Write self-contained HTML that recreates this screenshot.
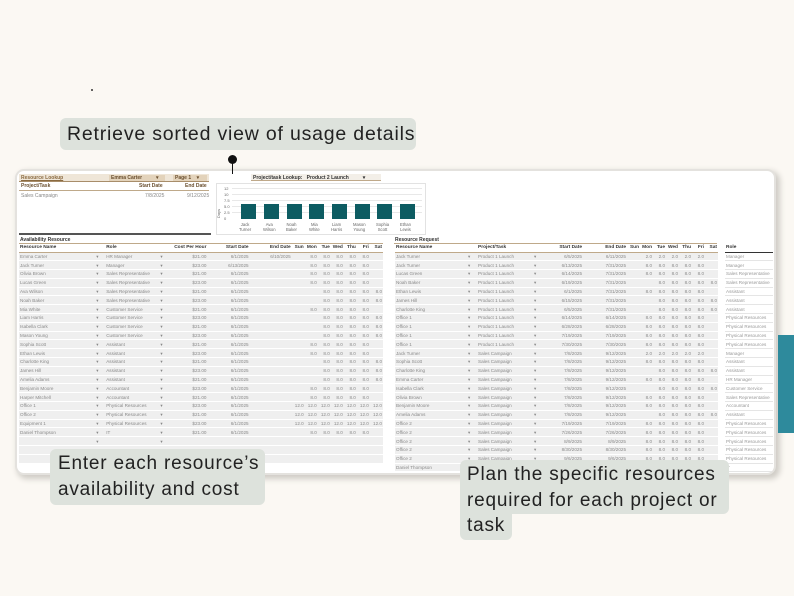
<!DOCTYPE html>
<html><head><meta charset="utf-8">
<style>
*{margin:0;padding:0;box-sizing:border-box}
body{width:794px;height:596px;background:#fbf8f3;position:relative;overflow:hidden;font-family:"Liberation Sans",sans-serif}
.abs{position:absolute}
.panel{position:absolute;left:17px;top:171px;width:757px;height:302px;background:#fff;border-radius:7px;box-shadow:0 0 0 2px #e4e2de,3px 3px 6px 3px #cfccc6;overflow:hidden}
.t{position:absolute;font-size:5px;color:#555;white-space:nowrap}
.b{font-weight:bold;color:#333}
table{position:absolute;border-collapse:collapse;table-layout:fixed;font-size:4.6px;color:#8a8a8a}
td{height:8.8px;padding:0 1px;white-space:nowrap;overflow:hidden;border-bottom:1px solid #fff;background:#efefef;line-height:7px}
th{height:8px;font-weight:bold;color:#333;text-align:left;padding:0 1px;white-space:nowrap;border-bottom:1px solid #bfa98a;font-size:4.8px}
.r{text-align:right}.c{text-align:center}
.call{position:absolute;background:#dde2dc;border-radius:6px;color:#222;font-size:19px;font-family:"Liberation Sans",sans-serif;letter-spacing:0.8px;white-space:nowrap}
</style></head><body>
<div class="abs" style="left:91px;top:89px;width:2px;height:2px;background:#333;border-radius:1px"></div>

<div class="panel">
 <div class="abs" style="left:2px;top:3px;width:190px;height:8px;background:#efe6d8;border-bottom:1px solid #a88d6a"></div>
 <div class="t b" style="left:4px;top:4px;color:#8a6a40;text-decoration:underline">Resource Lookup</div>
 <div class="abs" style="left:92px;top:4px;width:56px;height:6px;background:#e3d3bb"></div>
 <div class="t b" style="left:94px;top:4px;color:#6b5030">Emma Carter&nbsp;&nbsp;&nbsp;&nbsp;&nbsp;&nbsp;&nbsp;&nbsp;&nbsp;&nbsp;▾</div>
 <div class="abs" style="left:156px;top:4px;width:34px;height:6px;background:#e3d3bb"></div>
 <div class="t b" style="left:158px;top:4px;color:#6b5030">Page 1&nbsp;&nbsp;&nbsp;&nbsp;▾</div>
 <div class="t b" style="left:4px;top:12px;color:#6b5030">Project/Task</div>
 <div class="t b" style="left:122px;top:12px;color:#6b5030">Start Date</div>
 <div class="t b" style="left:168px;top:12px;color:#6b5030">End Date</div>
 <div class="abs" style="left:2px;top:19px;width:190px;height:1px;background:#bfa98a"></div>
 <div class="t" style="left:4px;top:22px;color:#888">Sales Campaign</div>
 <div class="t" style="left:128px;top:22px;color:#888">7/8/2025</div>
 <div class="t" style="left:170px;top:22px;color:#888">9/12/2025</div>
 <div class="abs" style="left:2px;top:62px;width:192px;height:2px;background:#555"></div>

 <div class="abs" style="left:234px;top:3px;width:130px;height:7px;background:#f3efe8;border-bottom:1px solid #bfa98a"></div>
 <div class="t b" style="left:236px;top:4px">Project/task Lookup:&nbsp;&nbsp;&nbsp;Product 2 Launch&nbsp;&nbsp;&nbsp;&nbsp;&nbsp;&nbsp;&nbsp;&nbsp;&nbsp;&nbsp;▾</div>

 <div class="abs" style="left:199px;top:12px;width:210px;height:52px;border:1px solid #e2e2e2;background:#fff"></div>
 <div class="abs" style="left:215px;top:17px;width:190px;height:30px;background:repeating-linear-gradient(#e8e8e8 0 1px,transparent 1px 6px)"></div>
 <div class="t" style="left:207px;top:15px;font-size:4px;line-height:6px;color:#666">12<br>10<br>7.5<br>5.0<br>2.5<br>0</div>
 <div class="t" style="left:197px;top:40px;font-size:4px;color:#666;transform:rotate(-90deg)">Days</div>
 <div class="abs" style="left:224px;top:33px;width:15px;height:15px;background:#0d5c62"></div>
 <div class="abs" style="left:247px;top:33px;width:15px;height:15px;background:#0d5c62"></div>
 <div class="abs" style="left:270px;top:33px;width:15px;height:15px;background:#0d5c62"></div>
 <div class="abs" style="left:292px;top:33px;width:15px;height:15px;background:#0d5c62"></div>
 <div class="abs" style="left:315px;top:33px;width:15px;height:15px;background:#0d5c62"></div>
 <div class="abs" style="left:338px;top:33px;width:15px;height:15px;background:#0d5c62"></div>
 <div class="abs" style="left:360px;top:33px;width:15px;height:15px;background:#0d5c62"></div>
 <div class="abs" style="left:383px;top:33px;width:15px;height:15px;background:#0d5c62"></div>
 <div class="t c" style="left:222px;top:51px;font-size:4.2px;line-height:5px;color:#666">Jack<br>Turner</div>
 <div class="t c" style="left:246px;top:51px;font-size:4.2px;line-height:5px;color:#666">Ava<br>Wilson</div>
 <div class="t c" style="left:269px;top:51px;font-size:4.2px;line-height:5px;color:#666">Noah<br>Baker</div>
 <div class="t c" style="left:292px;top:51px;font-size:4.2px;line-height:5px;color:#666">Mia<br>White</div>
 <div class="t c" style="left:314px;top:51px;font-size:4.2px;line-height:5px;color:#666">Liam<br>Harris</div>
 <div class="t c" style="left:336px;top:51px;font-size:4.2px;line-height:5px;color:#666">Mason<br>Young</div>
 <div class="t c" style="left:359px;top:51px;font-size:4.2px;line-height:5px;color:#666">Sophia<br>Scott</div>
 <div class="t c" style="left:383px;top:51px;font-size:4.2px;line-height:5px;color:#666">Ethan<br>Lewis</div>

 <div class="t b" style="left:3px;top:66px">Availability Resource</div>
 <div class="abs" style="left:2px;top:72px;width:364px;height:1px;background:#bfa98a"></div>
 <div class="t b" style="left:378px;top:66px">Resource Request</div>
 <div class="abs" style="left:377px;top:72px;width:323px;height:1px;background:#bfa98a"></div>

 <table style="left:2px;top:73px;width:364px">
 <colgroup><col style="width:76px"><col style="width:10px"><col style="width:54px"><col style="width:10px"><col style="width:38px"><col style="width:42px"><col style="width:42px"><col span="7" style="width:13px"></colgroup>
 <tr><th>Resource Name</th><th></th><th>Role</th><th></th><th class="r">Cost Per Hour</th><th class="r">Start Date</th><th class="r">End Date</th><th class="r">Sun</th><th class="r">Mon</th><th class="r">Tue</th><th class="r">Wed</th><th class="r">Thu</th><th class="r">Fri</th><th class="r">Sat</th></tr>
 <tr><td>Emma Carter</td><td>▾</td><td>HR Manager</td><td>▾</td><td class="r">$21.00</td><td class="r">6/1/2025</td><td class="r">6/10/2025</td><td></td><td class="r">8.0</td><td class="r">8.0</td><td class="r">8.0</td><td class="r">8.0</td><td class="r">8.0</td><td></td></tr>
 <tr><td>Jack Turner</td><td>▾</td><td>Manager</td><td>▾</td><td class="r">$23.00</td><td class="r">6/13/2025</td><td></td><td></td><td class="r">8.0</td><td class="r">8.0</td><td class="r">8.0</td><td class="r">8.0</td><td class="r">8.0</td><td></td></tr>
 <tr><td>Olivia Brown</td><td>▾</td><td>Sales Representative</td><td>▾</td><td class="r">$21.00</td><td class="r">6/1/2025</td><td></td><td></td><td class="r">8.0</td><td class="r">8.0</td><td class="r">8.0</td><td class="r">8.0</td><td class="r">8.0</td><td></td></tr>
 <tr><td>Lucas Green</td><td>▾</td><td>Sales Representative</td><td>▾</td><td class="r">$23.00</td><td class="r">6/1/2025</td><td></td><td></td><td class="r">8.0</td><td class="r">8.0</td><td class="r">8.0</td><td class="r">8.0</td><td class="r">8.0</td><td></td></tr>
 <tr><td>Ava Wilson</td><td>▾</td><td>Sales Representative</td><td>▾</td><td class="r">$21.00</td><td class="r">6/1/2025</td><td></td><td></td><td></td><td class="r">8.0</td><td class="r">8.0</td><td class="r">8.0</td><td class="r">8.0</td><td class="r">8.0</td></tr>
 <tr><td>Noah Baker</td><td>▾</td><td>Sales Representative</td><td>▾</td><td class="r">$23.00</td><td class="r">6/1/2025</td><td></td><td></td><td></td><td class="r">8.0</td><td class="r">8.0</td><td class="r">8.0</td><td class="r">8.0</td><td class="r">8.0</td></tr>
 <tr><td>Mia White</td><td>▾</td><td>Customer Service</td><td>▾</td><td class="r">$21.00</td><td class="r">6/1/2025</td><td></td><td></td><td class="r">8.0</td><td class="r">8.0</td><td class="r">8.0</td><td class="r">8.0</td><td class="r">8.0</td><td></td></tr>
 <tr><td>Liam Harris</td><td>▾</td><td>Customer Service</td><td>▾</td><td class="r">$23.00</td><td class="r">6/1/2025</td><td></td><td></td><td></td><td class="r">8.0</td><td class="r">8.0</td><td class="r">8.0</td><td class="r">8.0</td><td class="r">8.0</td></tr>
 <tr><td>Isabella Clark</td><td>▾</td><td>Customer Service</td><td>▾</td><td class="r">$21.00</td><td class="r">6/1/2025</td><td></td><td></td><td></td><td class="r">8.0</td><td class="r">8.0</td><td class="r">8.0</td><td class="r">8.0</td><td class="r">8.0</td></tr>
 <tr><td>Mason Young</td><td>▾</td><td>Customer Service</td><td>▾</td><td class="r">$23.00</td><td class="r">6/1/2025</td><td></td><td></td><td></td><td class="r">8.0</td><td class="r">8.0</td><td class="r">8.0</td><td class="r">8.0</td><td class="r">8.0</td></tr>
 <tr><td>Sophia Scott</td><td>▾</td><td>Assistant</td><td>▾</td><td class="r">$21.00</td><td class="r">6/1/2025</td><td></td><td></td><td class="r">8.0</td><td class="r">8.0</td><td class="r">8.0</td><td class="r">8.0</td><td class="r">8.0</td><td></td></tr>
 <tr><td>Ethan Lewis</td><td>▾</td><td>Assistant</td><td>▾</td><td class="r">$23.00</td><td class="r">6/1/2025</td><td></td><td></td><td class="r">8.0</td><td class="r">8.0</td><td class="r">8.0</td><td class="r">8.0</td><td class="r">8.0</td><td></td></tr>
 <tr><td>Charlotte King</td><td>▾</td><td>Assistant</td><td>▾</td><td class="r">$21.00</td><td class="r">6/1/2025</td><td></td><td></td><td></td><td class="r">8.0</td><td class="r">8.0</td><td class="r">8.0</td><td class="r">8.0</td><td class="r">8.0</td></tr>
 <tr><td>James Hill</td><td>▾</td><td>Assistant</td><td>▾</td><td class="r">$23.00</td><td class="r">6/1/2025</td><td></td><td></td><td></td><td class="r">8.0</td><td class="r">8.0</td><td class="r">8.0</td><td class="r">8.0</td><td class="r">8.0</td></tr>
 <tr><td>Amelia Adams</td><td>▾</td><td>Assistant</td><td>▾</td><td class="r">$21.00</td><td class="r">6/1/2025</td><td></td><td></td><td></td><td class="r">8.0</td><td class="r">8.0</td><td class="r">8.0</td><td class="r">8.0</td><td class="r">8.0</td></tr>
 <tr><td>Benjamin Moore</td><td>▾</td><td>Accountant</td><td>▾</td><td class="r">$23.00</td><td class="r">6/1/2025</td><td></td><td></td><td class="r">8.0</td><td class="r">8.0</td><td class="r">8.0</td><td class="r">8.0</td><td class="r">8.0</td><td></td></tr>
 <tr><td>Harper Mitchell</td><td>▾</td><td>Accountant</td><td>▾</td><td class="r">$21.00</td><td class="r">6/1/2025</td><td></td><td></td><td class="r">8.0</td><td class="r">8.0</td><td class="r">8.0</td><td class="r">8.0</td><td class="r">8.0</td><td></td></tr>
 <tr><td>Office 1</td><td>▾</td><td>Physical Resources</td><td>▾</td><td class="r">$23.00</td><td class="r">6/1/2025</td><td></td><td class="r">12.0</td><td class="r">12.0</td><td class="r">12.0</td><td class="r">12.0</td><td class="r">12.0</td><td class="r">12.0</td><td class="r">12.0</td></tr>
 <tr><td>Office 2</td><td>▾</td><td>Physical Resources</td><td>▾</td><td class="r">$21.00</td><td class="r">6/1/2025</td><td></td><td class="r">12.0</td><td class="r">12.0</td><td class="r">12.0</td><td class="r">12.0</td><td class="r">12.0</td><td class="r">12.0</td><td class="r">12.0</td></tr>
 <tr><td>Equipment 1</td><td>▾</td><td>Physical Resources</td><td>▾</td><td class="r">$23.00</td><td class="r">6/1/2025</td><td></td><td class="r">12.0</td><td class="r">12.0</td><td class="r">12.0</td><td class="r">12.0</td><td class="r">12.0</td><td class="r">12.0</td><td class="r">12.0</td></tr>
 <tr><td>Daniel Thompson</td><td>▾</td><td>IT</td><td>▾</td><td class="r">$21.00</td><td class="r">6/1/2025</td><td></td><td></td><td class="r">8.0</td><td class="r">8.0</td><td class="r">8.0</td><td class="r">8.0</td><td class="r">8.0</td><td></td></tr>
 <tr><td></td><td>▾</td><td></td><td>▾</td><td></td><td></td><td></td><td></td><td></td><td></td><td></td><td></td><td></td><td></td></tr>
 <tr><td></td><td></td><td></td><td></td><td></td><td></td><td></td><td></td><td></td><td></td><td></td><td></td><td></td><td></td></tr>
 <tr><td></td><td></td><td></td><td></td><td></td><td></td><td></td><td></td><td></td><td></td><td></td><td></td><td></td><td></td></tr>
 </table>

 <table style="left:378px;top:73px;width:323px">
 <colgroup><col style="width:72px"><col style="width:10px"><col style="width:56px"><col style="width:10px"><col style="width:40px"><col style="width:44px"><col span="7" style="width:13px"></colgroup>
 <tr><th>Resource Name</th><th></th><th>Project/Task</th><th></th><th class="r">Start Date</th><th class="r">End Date</th><th class="r">Sun</th><th class="r">Mon</th><th class="r">Tue</th><th class="r">Wed</th><th class="r">Thu</th><th class="r">Fri</th><th class="r">Sat</th></tr>
 <tr><td>Jack Turner</td><td>▾</td><td>Product 1 Launch</td><td>▾</td><td class="r">6/5/2025</td><td class="r">6/11/2025</td><td></td><td class="r">2.0</td><td class="r">2.0</td><td class="r">2.0</td><td class="r">2.0</td><td class="r">2.0</td><td></td></tr>
 <tr><td>Jack Turner</td><td>▾</td><td>Product 1 Launch</td><td>▾</td><td class="r">6/13/2025</td><td class="r">7/31/2025</td><td></td><td class="r">8.0</td><td class="r">8.0</td><td class="r">8.0</td><td class="r">8.0</td><td class="r">8.0</td><td></td></tr>
 <tr><td>Lucas Green</td><td>▾</td><td>Product 1 Launch</td><td>▾</td><td class="r">6/14/2025</td><td class="r">7/31/2025</td><td></td><td class="r">8.0</td><td class="r">8.0</td><td class="r">8.0</td><td class="r">8.0</td><td class="r">8.0</td><td></td></tr>
 <tr><td>Noah Baker</td><td>▾</td><td>Product 1 Launch</td><td>▾</td><td class="r">6/19/2025</td><td class="r">7/31/2025</td><td></td><td></td><td class="r">8.0</td><td class="r">8.0</td><td class="r">8.0</td><td class="r">8.0</td><td class="r">8.0</td></tr>
 <tr><td>Ethan Lewis</td><td>▾</td><td>Product 1 Launch</td><td>▾</td><td class="r">6/1/2025</td><td class="r">7/31/2025</td><td></td><td class="r">8.0</td><td class="r">8.0</td><td class="r">8.0</td><td class="r">8.0</td><td class="r">8.0</td><td></td></tr>
 <tr><td>James Hill</td><td>▾</td><td>Product 1 Launch</td><td>▾</td><td class="r">6/15/2025</td><td class="r">7/31/2025</td><td></td><td></td><td class="r">8.0</td><td class="r">8.0</td><td class="r">8.0</td><td class="r">8.0</td><td class="r">8.0</td></tr>
 <tr><td>Charlotte King</td><td>▾</td><td>Product 1 Launch</td><td>▾</td><td class="r">6/5/2025</td><td class="r">7/31/2025</td><td></td><td></td><td class="r">8.0</td><td class="r">8.0</td><td class="r">8.0</td><td class="r">8.0</td><td class="r">8.0</td></tr>
 <tr><td>Office 1</td><td>▾</td><td>Product 1 Launch</td><td>▾</td><td class="r">6/14/2025</td><td class="r">6/14/2025</td><td></td><td class="r">8.0</td><td class="r">8.0</td><td class="r">8.0</td><td class="r">8.0</td><td class="r">8.0</td><td></td></tr>
 <tr><td>Office 1</td><td>▾</td><td>Product 1 Launch</td><td>▾</td><td class="r">6/28/2025</td><td class="r">6/28/2025</td><td></td><td class="r">8.0</td><td class="r">8.0</td><td class="r">8.0</td><td class="r">8.0</td><td class="r">8.0</td><td></td></tr>
 <tr><td>Office 1</td><td>▾</td><td>Product 1 Launch</td><td>▾</td><td class="r">7/19/2025</td><td class="r">7/19/2025</td><td></td><td class="r">8.0</td><td class="r">8.0</td><td class="r">8.0</td><td class="r">8.0</td><td class="r">8.0</td><td></td></tr>
 <tr><td>Office 1</td><td>▾</td><td>Product 1 Launch</td><td>▾</td><td class="r">7/30/2025</td><td class="r">7/30/2025</td><td></td><td class="r">8.0</td><td class="r">8.0</td><td class="r">8.0</td><td class="r">8.0</td><td class="r">8.0</td><td></td></tr>
 <tr><td>Jack Turner</td><td>▾</td><td>Sales Campaign</td><td>▾</td><td class="r">7/8/2025</td><td class="r">9/12/2025</td><td></td><td class="r">2.0</td><td class="r">2.0</td><td class="r">2.0</td><td class="r">2.0</td><td class="r">2.0</td><td></td></tr>
 <tr><td>Sophia Scott</td><td>▾</td><td>Sales Campaign</td><td>▾</td><td class="r">7/8/2025</td><td class="r">9/12/2025</td><td></td><td class="r">8.0</td><td class="r">8.0</td><td class="r">8.0</td><td class="r">8.0</td><td class="r">8.0</td><td></td></tr>
 <tr><td>Charlotte King</td><td>▾</td><td>Sales Campaign</td><td>▾</td><td class="r">7/8/2025</td><td class="r">9/12/2025</td><td></td><td></td><td class="r">8.0</td><td class="r">8.0</td><td class="r">8.0</td><td class="r">8.0</td><td class="r">8.0</td></tr>
 <tr><td>Emma Carter</td><td>▾</td><td>Sales Campaign</td><td>▾</td><td class="r">7/8/2025</td><td class="r">9/12/2025</td><td></td><td class="r">8.0</td><td class="r">8.0</td><td class="r">8.0</td><td class="r">8.0</td><td class="r">8.0</td><td></td></tr>
 <tr><td>Isabella Clark</td><td>▾</td><td>Sales Campaign</td><td>▾</td><td class="r">7/8/2025</td><td class="r">9/12/2025</td><td></td><td></td><td class="r">8.0</td><td class="r">8.0</td><td class="r">8.0</td><td class="r">8.0</td><td class="r">8.0</td></tr>
 <tr><td>Olivia Brown</td><td>▾</td><td>Sales Campaign</td><td>▾</td><td class="r">7/8/2025</td><td class="r">9/12/2025</td><td></td><td class="r">8.0</td><td class="r">8.0</td><td class="r">8.0</td><td class="r">8.0</td><td class="r">8.0</td><td></td></tr>
 <tr><td>Benjamin Moore</td><td>▾</td><td>Sales Campaign</td><td>▾</td><td class="r">7/8/2025</td><td class="r">9/12/2025</td><td></td><td class="r">8.0</td><td class="r">8.0</td><td class="r">8.0</td><td class="r">8.0</td><td class="r">8.0</td><td></td></tr>
 <tr><td>Amelia Adams</td><td>▾</td><td>Sales Campaign</td><td>▾</td><td class="r">7/8/2025</td><td class="r">9/12/2025</td><td></td><td></td><td class="r">8.0</td><td class="r">8.0</td><td class="r">8.0</td><td class="r">8.0</td><td class="r">8.0</td></tr>
 <tr><td>Office 2</td><td>▾</td><td>Sales Campaign</td><td>▾</td><td class="r">7/19/2025</td><td class="r">7/19/2025</td><td></td><td class="r">8.0</td><td class="r">8.0</td><td class="r">8.0</td><td class="r">8.0</td><td class="r">8.0</td><td></td></tr>
 <tr><td>Office 2</td><td>▾</td><td>Sales Campaign</td><td>▾</td><td class="r">7/26/2025</td><td class="r">7/26/2025</td><td></td><td class="r">8.0</td><td class="r">8.0</td><td class="r">8.0</td><td class="r">8.0</td><td class="r">8.0</td><td></td></tr>
 <tr><td>Office 2</td><td>▾</td><td>Sales Campaign</td><td>▾</td><td class="r">8/9/2025</td><td class="r">8/9/2025</td><td></td><td class="r">8.0</td><td class="r">8.0</td><td class="r">8.0</td><td class="r">8.0</td><td class="r">8.0</td><td></td></tr>
 <tr><td>Office 2</td><td>▾</td><td>Sales Campaign</td><td>▾</td><td class="r">8/30/2025</td><td class="r">8/30/2025</td><td></td><td class="r">8.0</td><td class="r">8.0</td><td class="r">8.0</td><td class="r">8.0</td><td class="r">8.0</td><td></td></tr>
 <tr><td>Office 2</td><td>▾</td><td>Sales Campaign</td><td>▾</td><td class="r">9/6/2025</td><td class="r">9/6/2025</td><td></td><td class="r">8.0</td><td class="r">8.0</td><td class="r">8.0</td><td class="r">8.0</td><td class="r">8.0</td><td></td></tr>
 <tr><td>Daniel Thompson</td><td>▾</td><td>Sales Campaign</td><td>▾</td><td class="r">9/1/2025</td><td class="r">9/12/2025</td><td></td><td class="r">8.0</td><td class="r">8.0</td><td class="r">8.0</td><td class="r">8.0</td><td class="r">8.0</td><td></td></tr>
 </table>

 <table style="left:708px;top:73px;width:48px;color:#999">
 <colgroup><col style="width:48px"></colgroup>
 <tr><th style="border-bottom:1px solid #333">Role</th></tr>
 <tr><td style="background:#fff;border-bottom:1px solid #e5e5e5">Manager</td></tr>
 <tr><td style="background:#fff;border-bottom:1px solid #e5e5e5">Manager</td></tr>
 <tr><td style="background:#fff;border-bottom:1px solid #e5e5e5">Sales Representative</td></tr>
 <tr><td style="background:#fff;border-bottom:1px solid #e5e5e5">Sales Representative</td></tr>
 <tr><td style="background:#fff;border-bottom:1px solid #e5e5e5">Assistant</td></tr>
 <tr><td style="background:#fff;border-bottom:1px solid #e5e5e5">Assistant</td></tr>
 <tr><td style="background:#fff;border-bottom:1px solid #e5e5e5">Assistant</td></tr>
 <tr><td style="background:#fff;border-bottom:1px solid #e5e5e5">Physical Resources</td></tr>
 <tr><td style="background:#fff;border-bottom:1px solid #e5e5e5">Physical Resources</td></tr>
 <tr><td style="background:#fff;border-bottom:1px solid #e5e5e5">Physical Resources</td></tr>
 <tr><td style="background:#fff;border-bottom:1px solid #e5e5e5">Physical Resources</td></tr>
 <tr><td style="background:#fff;border-bottom:1px solid #e5e5e5">Manager</td></tr>
 <tr><td style="background:#fff;border-bottom:1px solid #e5e5e5">Assistant</td></tr>
 <tr><td style="background:#fff;border-bottom:1px solid #e5e5e5">Assistant</td></tr>
 <tr><td style="background:#fff;border-bottom:1px solid #e5e5e5">HR Manager</td></tr>
 <tr><td style="background:#fff;border-bottom:1px solid #e5e5e5">Customer Service</td></tr>
 <tr><td style="background:#fff;border-bottom:1px solid #e5e5e5">Sales Representative</td></tr>
 <tr><td style="background:#fff;border-bottom:1px solid #e5e5e5">Accountant</td></tr>
 <tr><td style="background:#fff;border-bottom:1px solid #e5e5e5">Assistant</td></tr>
 <tr><td style="background:#fff;border-bottom:1px solid #e5e5e5">Physical Resources</td></tr>
 <tr><td style="background:#fff;border-bottom:1px solid #e5e5e5">Physical Resources</td></tr>
 <tr><td style="background:#fff;border-bottom:1px solid #e5e5e5">Physical Resources</td></tr>
 <tr><td style="background:#fff;border-bottom:1px solid #e5e5e5">Physical Resources</td></tr>
 <tr><td style="background:#fff;border-bottom:1px solid #e5e5e5">Physical Resources</td></tr>
 <tr><td style="background:#fff;border-bottom:1px solid #e5e5e5">IT</td></tr>
 </table>
</div>

<div class="abs" style="left:778px;top:335px;width:16px;height:98px;background:#2e8a9c"></div>

<div class="call" style="left:60px;top:118px;width:356px;height:32px;line-height:32px;padding-left:7px;font-size:19.5px">Retrieve sorted view of usage details</div>
<div class="abs" style="left:228px;top:155px;width:9px;height:9px;border-radius:50%;background:#111"></div>
<div class="abs" style="left:232px;top:162px;width:1px;height:12px;background:#111"></div>

<div class="call" style="left:50px;top:449px;width:215px;height:56px;line-height:26px;padding:2px 0 0 8px">Enter each resource’s<br>availability and cost</div>

<div class="call" style="left:460px;top:460px;width:269px;height:54px;border-radius:6px 6px 6px 0"></div>
<div class="call" style="left:460px;top:505px;width:52px;height:35px"></div>
<div class="abs" style="left:467px;top:460px;font-size:19px;line-height:25.5px;color:#222;padding-top:2px;letter-spacing:0.8px;white-space:nowrap">Plan the specific resources<br>required for each project or<br>task</div>
</body></html>
